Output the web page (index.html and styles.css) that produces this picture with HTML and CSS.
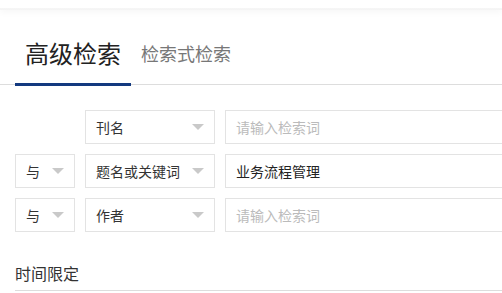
FILE: index.html
```html
<!DOCTYPE html>
<html>
<head>
  <meta charset="utf-8">
  <title>高级检索</title>
  <link rel="stylesheet" href="styles.css">
</head>
<body>
  <div class="top-shadow"></div>

  <div class="tabs">
    <div class="tab active">高级检索</div>
    <div class="tab">检索式检索</div>
  </div>

  <div class="search-form">
    <div class="row">
      <div class="logic-spacer"></div>
      <div class="select field-select"><span>刊名</span><i class="arrow"></i></div>
      <input class="keyword" type="text" placeholder="请输入检索词">
    </div>
    <div class="row">
      <div class="select logic-select"><span>与</span><i class="arrow"></i></div>
      <div class="select field-select"><span>题名或关键词</span><i class="arrow"></i></div>
      <input class="keyword" type="text" value="业务流程管理" placeholder="请输入检索词">
    </div>
    <div class="row">
      <div class="select logic-select"><span>与</span><i class="arrow"></i></div>
      <div class="select field-select"><span>作者</span><i class="arrow"></i></div>
      <input class="keyword" type="text" placeholder="请输入检索词">
    </div>
  </div>

  <div class="section-title">时间限定</div>
</body>
</html>
```

FILE: styles.css
```css
body {
  margin: 0;
  padding: 0;
  background-color: #fff;
  font-family: "Noto Sans CJK SC", "Noto Sans", sans-serif;
  color: #333;
  overflow: hidden;
}

.top-shadow {
  height: 10px;
  background: linear-gradient(to bottom, #fff 0, #fff 8px, #ececec 9px, #fdfdfd 100%);
  box-shadow: 0 3px 6px rgba(0,0,0,0.03);
}

.tabs {
  display: flex;
  padding-left: 15px;
  border-bottom: 1px solid #ddd;
  height: 74px;
}

.tab {
  padding: 26px 10px 13px;
  line-height: 34px;
  font-size: 18px;
  color: #777;
  border-bottom: 3px solid transparent;
  height: 34px;
}

.tab.active {
  font-size: 24px;
  color: #222;
  border-bottom-color: #13397f;
}

.search-form {
  margin-top: 25px;
  padding-left: 15px;
  display: flex;
  flex-direction: column;
  gap: 10px;
}

.row {
  display: flex;
  gap: 10px;
  height: 34px;
}

.logic-spacer {
  width: 60px;
  flex-shrink: 0;
}

.select {
  box-sizing: border-box;
  height: 34px;
  border: 1px solid #e3e3e3;
  display: flex;
  align-items: center;
  justify-content: space-between;
  padding: 0 10px;
  font-size: 14px;
  color: #333;
  flex-shrink: 0;
}

.logic-select { width: 60px; }
.field-select { width: 130px; }

.arrow {
  width: 0;
  height: 0;
  border-left: 6px solid transparent;
  border-right: 6px solid transparent;
  border-top: 6px solid #c9c9c9;
}

/* the input runs on past the right edge of the view */
.keyword {
  box-sizing: border-box;
  height: 34px;
  flex: 1;
  min-width: 0;
  border: 1px solid #e3e3e3;
  border-right: none;
  padding: 0 10px;
  font-family: inherit;
  font-size: 14px;
  color: #222;
  outline: none;
}

.keyword::placeholder {
  color: #bbb;
}

.section-title {
  margin: 29px 0 0 15px;
  padding-bottom: 5px;
  line-height: 24px;
  font-size: 16px;
  color: #333;
  border-bottom: 1px solid #ddd;
}
```
